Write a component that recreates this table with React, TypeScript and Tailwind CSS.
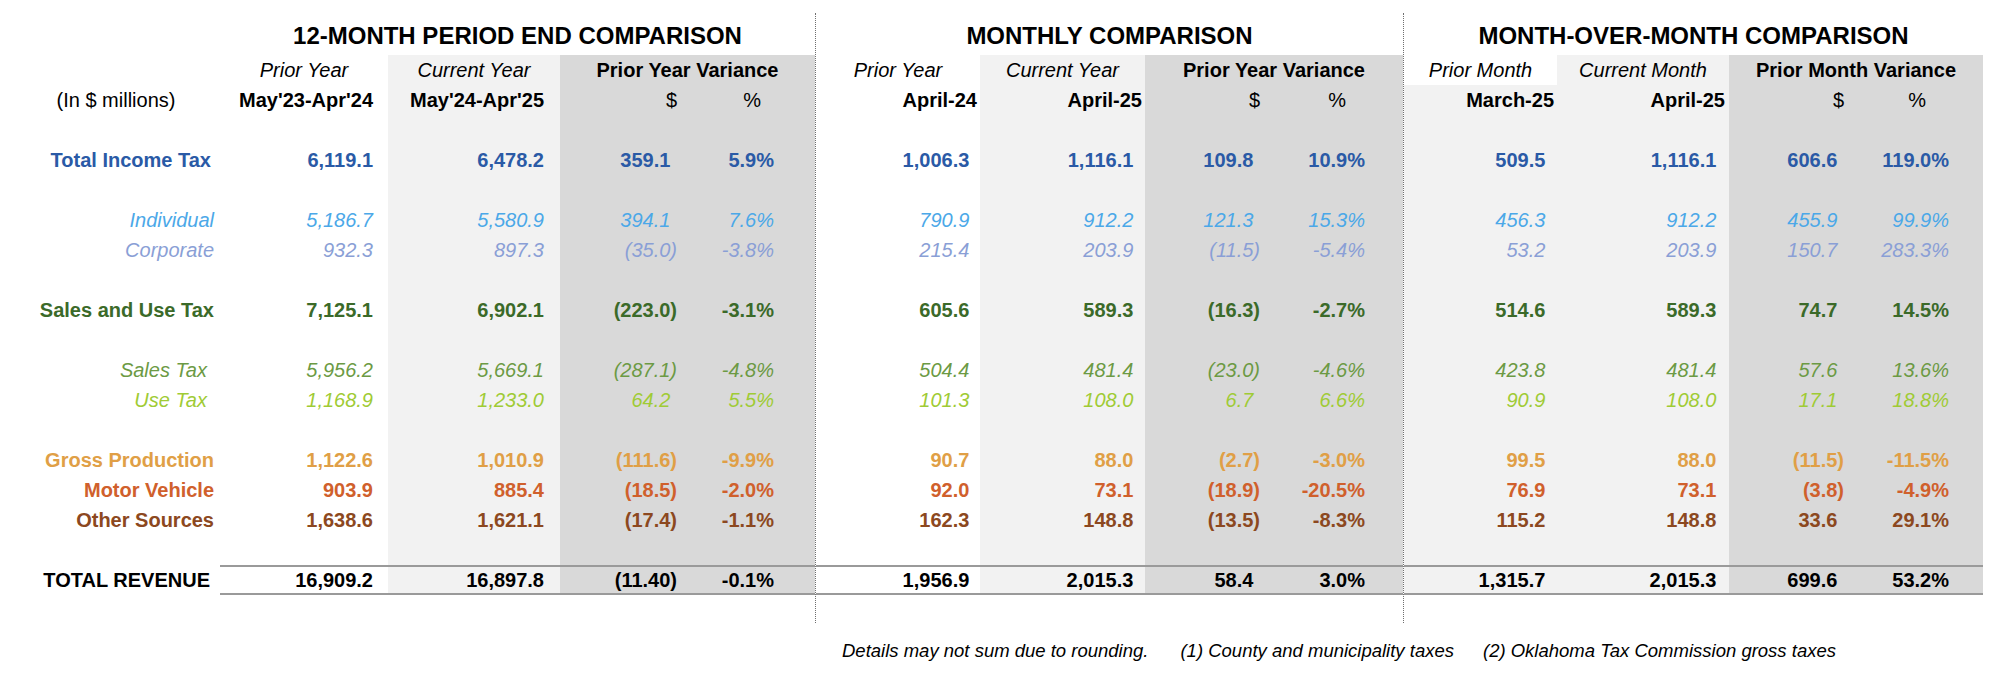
import React from "react"

type Col = {
  w: string
  bg: string
  head1Bg?: string
  pr: string
  hpr: string
  pad?: boolean
}

type Section = {
  title: string
  border: boolean
  w: string
  heads: [string, string, string]
  subs: [string, string]
  cols: Col[]
}

const sections: Section[] = [
  {
    title: "12-MONTH PERIOD END COMPARISON",
    border: false,
    w: "w-[815px]",
    heads: ["Prior Year", "Current Year", "Prior Year Variance"],
    subs: ["May'23-Apr'24", "May'24-Apr'25"],
    cols: [
      { w: "w-[168px]", bg: "bg-white", pr: "pr-[15px]", hpr: "pr-[15px]" },
      { w: "w-[172px]", bg: "bg-[#f2f2f2]", pr: "pr-[16px]", hpr: "pr-[16px]" },
      { w: "w-[140px]", bg: "bg-[#d9d9d9]", pr: "pr-[23px]", hpr: "pr-[23px]", pad: true },
      { w: "w-[115px]", bg: "bg-[#d9d9d9]", pr: "pr-[41px]", hpr: "pr-[54px]" },
    ],
  },
  {
    title: "MONTHLY COMPARISON",
    border: true,
    w: "w-[588px]",
    heads: ["Prior Year", "Current Year", "Prior Year Variance"],
    subs: ["April-24", "April-25"],
    cols: [
      { w: "w-[164px]", bg: "bg-white", pr: "pr-[4px]", hpr: "pr-[3px]", pad: true },
      { w: "w-[165px]", bg: "bg-[#f2f2f2]", pr: "pr-[5px]", hpr: "pr-[3px]", pad: true },
      { w: "w-[145px]", bg: "bg-[#d9d9d9]", pr: "pr-[30px]", hpr: "pr-[30px]", pad: true },
      { w: "w-[113px]", bg: "bg-[#d9d9d9]", pr: "pr-[38px]", hpr: "pr-[57px]" },
    ],
  },
  {
    title: "MONTH-OVER-MONTH COMPARISON",
    border: true,
    w: "w-[580px]",
    heads: ["Prior Month", "Current Month", "Prior Month Variance"],
    subs: ["March-25", "April-25"],
    cols: [
      { w: "w-[153px]", bg: "bg-[#f2f2f2]", head1Bg: "bg-white", pr: "pr-[5px]", hpr: "pr-[3px]", pad: true },
      { w: "w-[172px]", bg: "bg-[#f2f2f2]", pr: "pr-[6px]", hpr: "pr-[4px]", pad: true },
      { w: "w-[141px]", bg: "bg-[#d9d9d9]", pr: "pr-[26px]", hpr: "pr-[26px]", pad: true },
      { w: "w-[113px]", bg: "bg-[#d9d9d9]", pr: "pr-[34px]", hpr: "pr-[57px]" },
    ],
  },
]

type Row = {
  label: string
  cls: string
  lpr?: string
  total?: boolean
  vals: string[][]
} | null

// blank rows are null; vals are per section: prior, current, $ variance, % variance
const rows: Row[] = [
  null,
  {
    label: "Total Income Tax",
    cls: "font-bold text-[#2a5aa6]",
    lpr: "pr-[9px]",
    vals: [
      ["6,119.1", "6,478.2", "359.1", "5.9%"],
      ["1,006.3", "1,116.1", "109.8", "10.9%"],
      ["509.5", "1,116.1", "606.6", "119.0%"],
    ],
  },
  null,
  {
    label: "Individual",
    cls: "italic text-[#4ba8e8]",
    vals: [
      ["5,186.7", "5,580.9", "394.1", "7.6%"],
      ["790.9", "912.2", "121.3", "15.3%"],
      ["456.3", "912.2", "455.9", "99.9%"],
    ],
  },
  {
    label: "Corporate",
    cls: "italic text-[#8a9fd6]",
    vals: [
      ["932.3", "897.3", "(35.0)", "-3.8%"],
      ["215.4", "203.9", "(11.5)", "-5.4%"],
      ["53.2", "203.9", "150.7", "283.3%"],
    ],
  },
  null,
  {
    label: "Sales and Use Tax",
    cls: "font-bold text-[#3b6a29]",
    vals: [
      ["7,125.1", "6,902.1", "(223.0)", "-3.1%"],
      ["605.6", "589.3", "(16.3)", "-2.7%"],
      ["514.6", "589.3", "74.7", "14.5%"],
    ],
  },
  null,
  {
    label: "Sales Tax",
    cls: "italic text-[#6c9a44]",
    lpr: "pr-[13px]",
    vals: [
      ["5,956.2", "5,669.1", "(287.1)", "-4.8%"],
      ["504.4", "481.4", "(23.0)", "-4.6%"],
      ["423.8", "481.4", "57.6", "13.6%"],
    ],
  },
  {
    label: "Use Tax",
    cls: "italic text-[#9fcb35]",
    lpr: "pr-[13px]",
    vals: [
      ["1,168.9", "1,233.0", "64.2", "5.5%"],
      ["101.3", "108.0", "6.7", "6.6%"],
      ["90.9", "108.0", "17.1", "18.8%"],
    ],
  },
  null,
  {
    label: "Gross Production",
    cls: "font-bold text-[#e09f46]",
    vals: [
      ["1,122.6", "1,010.9", "(111.6)", "-9.9%"],
      ["90.7", "88.0", "(2.7)", "-3.0%"],
      ["99.5", "88.0", "(11.5)", "-11.5%"],
    ],
  },
  {
    label: "Motor Vehicle",
    cls: "font-bold text-[#d0602c]",
    vals: [
      ["903.9", "885.4", "(18.5)", "-2.0%"],
      ["92.0", "73.1", "(18.9)", "-20.5%"],
      ["76.9", "73.1", "(3.8)", "-4.9%"],
    ],
  },
  {
    label: "Other Sources",
    cls: "font-bold text-[#8c4820]",
    vals: [
      ["1,638.6", "1,621.1", "(17.4)", "-1.1%"],
      ["162.3", "148.8", "(13.5)", "-8.3%"],
      ["115.2", "148.8", "33.6", "29.1%"],
    ],
  },
  null,
  {
    label: "TOTAL REVENUE",
    cls: "font-bold text-black",
    lpr: "pr-[10px]",
    total: true,
    vals: [
      ["16,909.2", "16,897.8", "(11.40)", "-0.1%"],
      ["1,956.9", "2,015.3", "58.4", "3.0%"],
      ["1,315.7", "2,015.3", "699.6", "53.2%"],
    ],
  },
]

function Num({ v, pad }: { v: string; pad?: boolean }) {
  const neg = v.endsWith(")")
  return (
    <>
      {v}
      {pad && !neg && <span className="invisible">)</span>}
    </>
  )
}

function SectionBlock({ s, idx }: { s: Section; idx: number }) {
  const first = idx === 0
  return (
    <div className={`${s.w} h-[610px] flex flex-col shrink-0 ${s.border ? "border-l border-dotted border-[#6f6f6f]" : ""}`}>
      <div className="h-[42px] flex items-center pt-[3px]">
        {first && <div className="w-[220px] shrink-0" />}
        <div className="flex-1 text-center text-[24px] font-bold text-black">{s.title}</div>
      </div>

      {/* header row 1 */}
      <div className="flex h-[30px] items-center">
        {first && <div className="w-[220px] h-full shrink-0" />}
        <div className={`${s.cols[0].w} ${s.cols[0].head1Bg ?? s.cols[0].bg} h-full flex items-center justify-center italic`}>
          {s.heads[0]}
        </div>
        <div className={`${s.cols[1].w} ${s.cols[1].bg} h-full flex items-center justify-center italic`}>
          {s.heads[1]}
        </div>
        <div className="flex-1 bg-[#d9d9d9] h-full flex items-center justify-center font-bold">{s.heads[2]}</div>
      </div>

      {/* header row 2 */}
      <div className="flex h-[30px]">
        {first && (
          <div className="w-[220px] h-full shrink-0 flex items-center justify-center pl-[12px]">(In $ millions)</div>
        )}
        <div className={`${s.cols[0].w} ${s.cols[0].bg} ${s.cols[0].hpr} h-full flex items-center justify-end font-bold`}>
          {s.subs[0]}
        </div>
        <div className={`${s.cols[1].w} ${s.cols[1].bg} ${s.cols[1].hpr} h-full flex items-center justify-end font-bold`}>
          {s.subs[1]}
        </div>
        <div className={`${s.cols[2].w} ${s.cols[2].bg} ${s.cols[2].hpr} h-full flex items-center justify-end`}>$</div>
        <div className={`${s.cols[3].w} ${s.cols[3].bg} ${s.cols[3].hpr} h-full flex items-center justify-end`}>%</div>
      </div>

      {rows.map((r, i) => (
        <div key={i} className={`flex h-[30px] ${r ? r.cls : ""}`}>
          {first && (
            <div className={`w-[220px] h-full shrink-0 flex items-center justify-end ${r?.lpr ?? "pr-[6px]"}`}>
              {r?.label}
            </div>
          )}
          {s.cols.map((c, j) => (
            <div
              key={j}
              className={`${c.w} ${c.bg} ${c.pr} h-full flex items-center justify-end ${
                r?.total ? "border-y-2 border-[#9a9a9a]" : ""
              }`}
            >
              {r && <Num v={r.vals[idx][j]} pad={c.pad} />}
            </div>
          ))}
        </div>
      ))}
    </div>
  )
}

export default function App() {
  return (
    <div className="w-[2000px] h-[677px] bg-white text-black text-[20px] leading-[24px] font-['Liberation_Sans',Arial,sans-serif] overflow-hidden">
      <div className="flex pt-[13px]">
        {sections.map((s, i) => (
          <SectionBlock key={s.title} s={s} idx={i} />
        ))}
      </div>
      <div className="flex pl-[842px] mt-[16px] italic text-[18.5px]">
        <span>Details may not sum due to rounding.</span>
        <span className="ml-[32px]">(1) County and municipality taxes</span>
        <span className="ml-[29px]">(2) Oklahoma Tax Commission gross taxes</span>
      </div>
    </div>
  )
}
